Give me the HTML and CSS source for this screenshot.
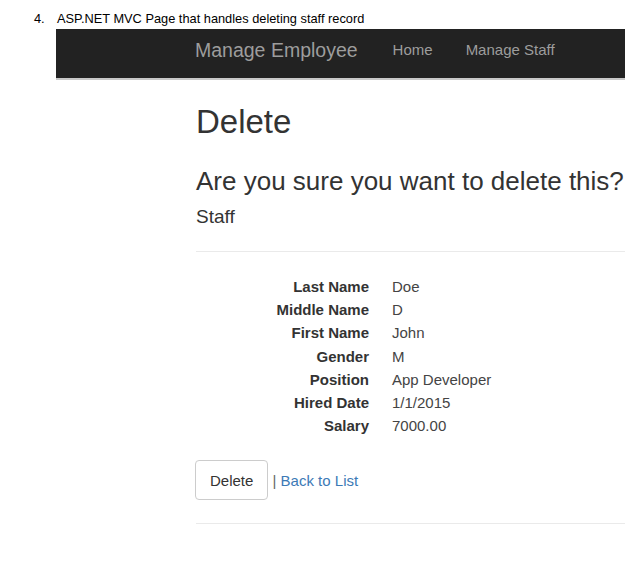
FILE: index.html
```html
<!DOCTYPE html>
<html lang="en">
<head>
  <meta charset="UTF-8" />
  <meta name="viewport" content="width=device-width, initial-scale=1.0"/>
  <title>Delete Staff</title>
  <link rel="stylesheet" href="styles.css">
</head>
<body>
  <div class="doc-item">
    <span class="doc-num">4.</span>
    <span class="doc-text">ASP.NET MVC Page that handles deleting staff record</span>
  </div>

  <div class="shot">
    <nav class="navbar">
      <a class="brand" href="#">Manage Employee</a>
      <a class="nav-link" href="#">Home</a>
      <a class="nav-link" href="#">Manage Staff</a>
    </nav>

    <div class="body-content">
      <h2>Delete</h2>
      <h3>Are you sure you want to delete this?</h3>
      <h4>Staff</h4>
      <hr class="rule-top" />

      <dl class="details">
        <dt>Last Name</dt><dd>Doe</dd>
        <dt>Middle Name</dt><dd>D</dd>
        <dt>First Name</dt><dd>John</dd>
        <dt>Gender</dt><dd>M</dd>
        <dt>Position</dt><dd>App Developer</dd>
        <dt>Hired Date</dt><dd>1/1/2015</dd>
        <dt>Salary</dt><dd>7000.00</dd>
      </dl>

      <div class="actions">
        <button class="btn" type="button">Delete</button> | <a class="back" href="#">Back to List</a>
      </div>

      <hr class="rule-bottom" />
    </div>
  </div>
</body>
</html>
```

FILE: styles.css
```css
body {
  margin: 0;
  background: #fff;
  font-family: "Liberation Sans", Arial, sans-serif;
  overflow: hidden;
}

.doc-item {
  display: flex;
  padding-top: 11px;
  font-size: 12.8px;
  line-height: 16px;
  color: #000;
}

.doc-num {
  width: 23px;
  margin-left: 34px;
}

.shot {
  margin-top: 2px;
  margin-left: 56px;
}

.navbar {
  display: flex;
  align-items: flex-start;
  height: 38px;
  padding: 11px 0 0 139px;
  background: #222;
  border-bottom: 2px solid #c8c8c8;
}

.navbar a {
  text-decoration: none;
  color: #9d9d9d;
}

.brand {
  font-size: 19.5px;
  line-height: 20px;
  margin-right: 35px;
}

.nav-link {
  font-size: 15px;
  line-height: 20px;
  margin-right: 33px;
}

.body-content {
  margin-left: 140px;
  color: #333;
}

h2, h3, h4 {
  font-weight: 500;
  margin: 0;
}

h2 {
  font-size: 33px;
  line-height: 40px;
  margin-top: 22px;
}

h3 {
  font-size: 26px;
  line-height: 32px;
  margin-top: 23px;
}

h4 {
  font-size: 19px;
  line-height: 24px;
  margin-top: 8px;
}

hr {
  border: 0;
  border-top: 1px solid #eaeaea;
  margin: 0;
}

.rule-top {
  margin-top: 22px;
}

.details {
  display: grid;
  grid-template-columns: 173px 1fr;
  column-gap: 23px;
  margin: 23px 0 0;
  font-size: 15px;
  line-height: 23.2px;
}

.details dt {
  font-weight: bold;
  text-align: right;
}

.details dd {
  margin: 0;
  color: #444;
}

.actions {
  margin-top: 23px;
  font-size: 15px;
  line-height: 23px;
  color: #666;
}

.btn {
  font-family: inherit;
  font-size: 15px;
  line-height: 23px;
  color: #333;
  background: #fff;
  border: 1px solid #ccc;
  border-radius: 4px;
  padding: 8px 14px 7px;
  margin-left: -1px;
}

.back {
  color: #3c7ab6;
  text-decoration: none;
}

.rule-bottom {
  margin-top: 23px;
}
```
